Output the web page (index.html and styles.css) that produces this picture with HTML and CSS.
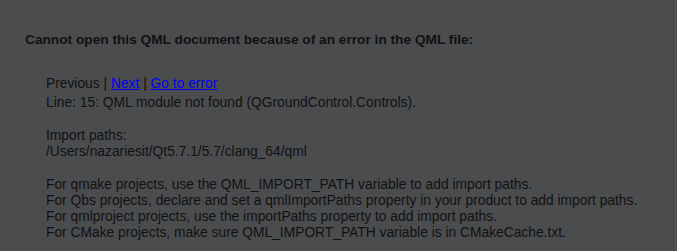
FILE: index.html
```html
<!DOCTYPE html>
<html>
<head>
<meta charset="utf-8">
<link rel="stylesheet" href="styles.css">
</head>
<body>
<div class="page">
  <h1 class="title">Cannot open this QML document because of an error in the QML file:</h1>
  <div class="body">
    <p class="nav">Previous | <a href="#">Next</a> | <a href="#">Go to error</a></p>
    <p class="line">Line: 15: QML module not found (QGroundControl.Controls).</p>
    <p class="block">Import paths:<br>/Users/nazariesit/Qt5.7.1/5.7/clang_64/qml</p>
    <p class="block">For qmake projects, use the QML_IMPORT_PATH variable to add import paths.<br>For Qbs projects, declare and set a qmlImportPaths property in your product to add import paths.<br>For qmlproject projects, use the importPaths property to add import paths.<br>For CMake projects, make sure QML_IMPORT_PATH variable is in CMakeCache.txt.</p>
  </div>
</div>
</body>
</html>
```
FILE: styles.css
```css
html, body {
  margin: 0;
  padding: 0;
  background: #4b4c4e;
}
.page {
  width: 676px;
  height: 251px;
  border-right: 1px solid #56575a;
  box-sizing: border-box;
  padding: 32px 0 0 25px;
  font-family: "Liberation Sans", Arial, sans-serif;
  color: #111113;
}
.title {
  margin: 0;
  font-size: 13.7px;
  font-weight: bold;
  line-height: 16px;
}
.body {
  padding: 28px 0 0 21px;
  font-size: 13.8px;
  line-height: 16px;
}
.body p {
  margin: 0;
}
.nav {
  margin-bottom: 3px !important;
}
.block {
  margin-top: 17px !important;
}
a {
  color: #0000ee;
  text-decoration: underline;
}
```
